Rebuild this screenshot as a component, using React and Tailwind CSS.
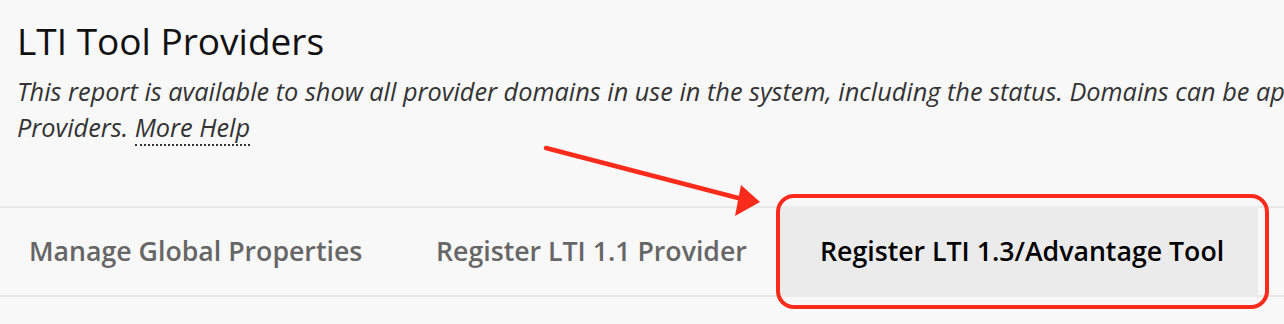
import React from 'react';

function App() {
  const tabs = [
    { label: 'Manage Global Properties', cls: 'w-[399px] pl-[29px]' },
    { label: 'Register LTI 1.1 Provider', cls: 'w-[381px] pl-[37px]' },
  ];

  return (
    <div className="relative h-[324px] w-[1284px] overflow-hidden bg-[#f8f8f8] font-['Open_Sans',sans-serif]">
      <div className="pl-[17px] pt-[19px]">
        <h1 className="whitespace-nowrap text-[37px] leading-[44px] font-normal text-[#111]">LTI Tool Providers</h1>
        <p className="mt-[10px] whitespace-nowrap text-[25.3px] italic leading-[36px] text-[#333]">
          This report is available to show all provider domains in use in the system, including the status. Domains can be approved or excluded from use as Tool
          <br />
          Providers.{' '}
          <a className="border-b-2 border-dotted border-[#333] leading-[26px]">More Help</a>
        </p>
      </div>

      <div className="mt-[61px] flex h-[91px] items-stretch border-y-2 border-[#e8e8e8]">
        {tabs.map((t) => (
          <div
            key={t.label}
            className={'flex shrink-0 items-center whitespace-nowrap text-[26.7px] font-semibold text-[#666] ' + t.cls}
          >
            {t.label}
          </div>
        ))}
        <div className="-my-[2px] flex w-[478px] shrink-0 items-center whitespace-nowrap bg-[#ebebeb] pl-[40px] text-[26.7px] font-semibold text-black">
          Register LTI 1.3/Advantage Tool
        </div>
      </div>

      {/* annotation: outline around active tab */}
      <div className="absolute left-[776px] top-[194px] h-[115px] w-[493px] rounded-[18px] border-[4px] border-[#fb2b1c]" />

      {/* annotation: arrow */}
      <svg className="absolute left-0 top-0" width="1284" height="324" viewBox="0 0 1284 324">
        <line x1="546" y1="148" x2="742" y2="199" stroke="#fb2b1c" strokeWidth="4.5" strokeLinecap="round" />
        <polygon points="760,202 741,185 735,216" fill="#fb2b1c" />
      </svg>
    </div>
  );
}

export default App;
